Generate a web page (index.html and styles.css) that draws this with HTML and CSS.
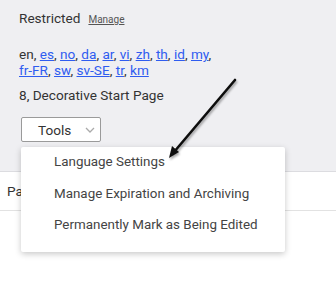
FILE: index.html
```html
<!DOCTYPE html>
<html lang="en">
<head>
    <meta charset="UTF-8">
    <title>Page Tools</title>
    <link rel="stylesheet" href="styles.css">
</head>
<body>
    <div class="panel">
        <div class="status">
            <span>Restricted</span>
            <a href="#" class="manage">Manage</a>
        </div>
        <div class="langs">
            en, <a href="#">es</a>, <a href="#">no</a>, <a href="#">da</a>, <a href="#">ar</a>, <a href="#">vi</a>, <a href="#">zh</a>, <a href="#">th</a>, <a href="#">id</a>, <a href="#">my</a>,<br>
            <a href="#">fr-FR</a>, <a href="#">sw</a>, <a href="#">sv-SE</a>, <a href="#">tr</a>, <a href="#">km</a>
        </div>
        <div class="page-name">8, Decorative Start Page</div>
        <button class="tools">
            Tools
            <svg width="10" height="6" viewBox="0 0 10 6"><path d="M1 1 L5 5 L9 1" fill="none" stroke="#aaa" stroke-width="1.3"/></svg>
        </button>
    </div>

    <div class="tabs">
        <span class="tab">Pa</span>
    </div>

    <ul class="menu">
        <li>Language Settings</li>
        <li>Manage Expiration and Archiving</li>
        <li>Permanently Mark as Being Edited</li>
    </ul>

    <svg class="arrow" width="336" height="283" viewBox="0 0 336 283">
        <defs>
            <filter id="shadow" x="-20%" y="-20%" width="140%" height="140%">
                <feDropShadow dx="1" dy="2" stdDeviation="1.2" flood-color="#000" flood-opacity="0.35"/>
            </filter>
        </defs>
        <g filter="url(#shadow)">
            <line x1="235" y1="80" x2="174" y2="152" stroke="#111" stroke-width="2.6" stroke-linecap="round"/>
            <path d="M169 158 L172 146 L179 152 Z" fill="#111"/>
        </g>
    </svg>
</body>
</html>
```

FILE: styles.css
```css
body {
    margin: 0;
    font-family: Roboto, "Liberation Sans", sans-serif;
    color: #333;
    background: #fff;
    width: 336px;
    height: 283px;
    overflow: hidden;
    position: relative;
}

a {
    color: #2f5cf0;
}

.panel {
    background-color: #efeff2;
    height: 172px;
    border-bottom: 1px solid #dcdce0;
    padding: 10px 0 0 19px;
    box-sizing: border-box;
}

.status {
    font-size: 13.6px;
    display: flex;
    align-items: baseline;
    gap: 8px;
}

.manage {
    color: #555;
    font-size: 10px;
}

.langs {
    font-size: 13.6px;
    line-height: 16px;
    margin-top: 20px;
}

.page-name {
    font-size: 13.6px;
    margin-top: 9px;
}

.tools {
    margin: 14px 0 0 2px;
    width: 80px;
    height: 25px;
    background: #fff;
    border: 1px solid #9a9a9a;
    border-radius: 2px;
    font-family: inherit;
    font-size: 13.6px;
    color: #333;
    display: flex;
    align-items: center;
    gap: 14px;
    padding: 0 0 0 16px;
}

.tabs {
    height: 38px;
    border-bottom: 1px solid #e2e2e2;
    display: flex;
    align-items: center;
    padding-left: 7px;
    font-size: 13.6px;
}

.menu {
    position: absolute;
    left: 21px;
    top: 147px;
    width: 264px;
    margin: 0;
    padding: 4px 0 6px;
    list-style: none;
    background: #fff;
    border-radius: 2px;
    box-shadow: 0 2px 6px rgba(0, 0, 0, 0.22);
    box-sizing: border-box;
}

.menu li {
    font-size: 13.4px;
    color: #444;
    height: 31.5px;
    line-height: 22px;
    padding-left: 33px;
}

.arrow {
    position: absolute;
    left: 0;
    top: 0;
    pointer-events: none;
}
```
